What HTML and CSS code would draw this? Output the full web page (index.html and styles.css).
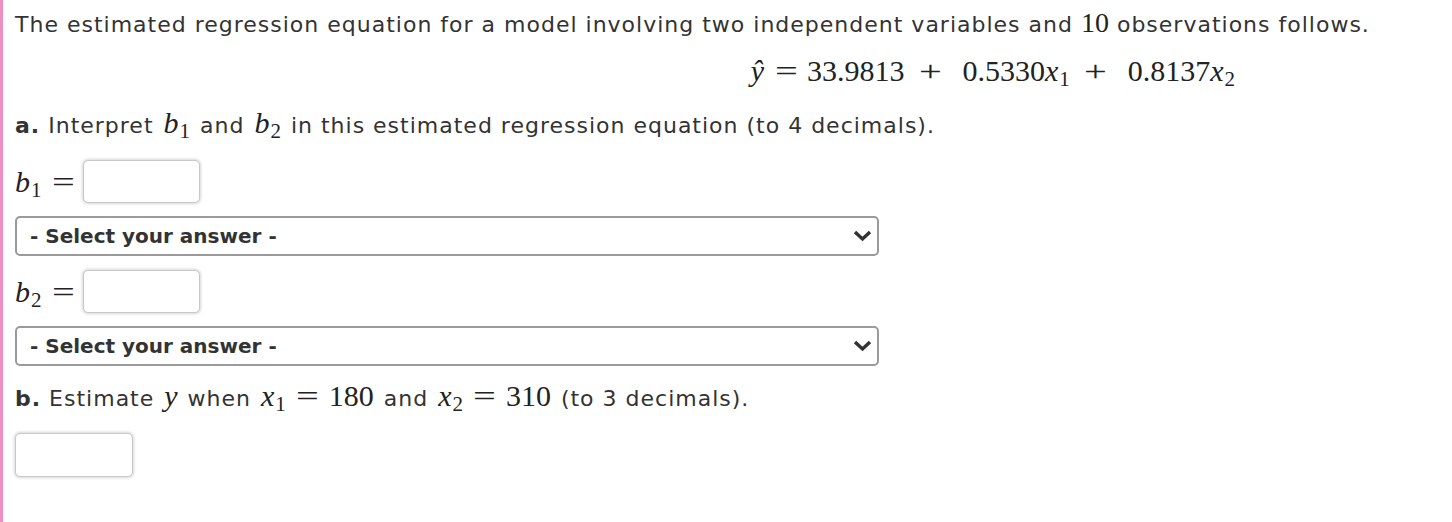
FILE: index.html
```html
<!DOCTYPE html>
<html>
<head>
<meta charset="utf-8">
<link rel="stylesheet" href="styles.css">
</head>
<body>
<div class="page">
  <p class="line first">The estimated regression equation for a model involving two independent variables and <span class="m num">10</span> observations follows.</p>
  <div class="eq"><span class="m"><i class="hat">ŷ</i><span class="op eqs">=</span>33.9813<span class="op plus">+</span>0.5330<i>x</i><sub>1</sub><span class="op plus">+</span>0.8137<i>x</i><sub>2</sub></span></div>
  <p class="line gap-a"><b>a.</b> Interpret <span class="m"><i>b</i><sub>1</sub></span> and <span class="m"><i>b</i><sub>2</sub></span> in this estimated regression equation (to 4 decimals).</p>
  <div class="row"><span class="m lbl"><i>b</i><sub>1</sub><span class="op lbleq">=</span></span><span class="box"></span></div>
  <div class="sel"><span>- Select your answer -</span><svg class="chev" width="19" height="12" viewBox="0 0 19 12"><polyline points="2,2 9.5,9 17,2" fill="none" stroke="#333" stroke-width="3.4"/></svg></div>
  <div class="row"><span class="m lbl"><i>b</i><sub>2</sub><span class="op lbleq">=</span></span><span class="box"></span></div>
  <div class="sel"><span>- Select your answer -</span><svg class="chev" width="19" height="12" viewBox="0 0 19 12"><polyline points="2,2 9.5,9 17,2" fill="none" stroke="#333" stroke-width="3.4"/></svg></div>
  <p class="line gap-b"><b>b.</b> Estimate <span class="m"><i>y</i></span> when <span class="m"><i>x</i><sub>1</sub><span class="op ieq">=</span>180</span> and <span class="m"><i>x</i><sub>2</sub><span class="op ieq">=</span>310</span> (to 3 decimals).</p>
  <div class="row last"><span class="box wide"></span></div>
</div>
</body>
</html>
```
FILE: styles.css
```css
html, body { margin: 0; padding: 0; background: #fff; }
.page {
  border-left: 3px solid #ee8fc1;
  min-height: 522px;
  box-sizing: border-box;
  padding: 10px 0 0 12px;
  width: 1452px;
  font-family: "DejaVu Sans", Verdana, sans-serif;
  font-size: 22px;
  letter-spacing: 1px;
  color: #333;
}
.line { margin: 0; line-height: 30px; height: 30px; white-space: nowrap; }
.line .m { margin: 0 2px; }
.m { font-family: "Liberation Serif", "DejaVu Serif", serif; font-size: 30px; color: #222; letter-spacing: 0; line-height: 0; }
.m i { font-style: italic; }
.m sub { font-size: 21px; vertical-align: -5px; line-height: 0; margin-left: 1px; }
.line .num { font-size: 28px; margin: 0; }
.op { display: inline-block; transform: scaleX(1.35); }
.eq {
  width: 1220px;
  text-align: right;
  height: 36px;
  line-height: 36px;
  margin-top: 16px;
}
.eq .m { font-size: 30px; }
.eq .eqs { margin: 0 12px 0 14px; }
.eq .plus { margin: 0 24px 0 17px; }
.gap-a { margin-top: 19px; }
.gap-b { margin-top: 18px; }
.row { display: flex; align-items: center; height: 43px; margin-top: 19px; }
.row + .sel { margin-top: 13px; }
.sel + .row { margin-top: 14px; }
.lbl { width: 68px; font-size: 30px; line-height: 1; }
.lbleq { margin-left: 13px; }
.ieq { margin: 0 13px; }
.box {
  display: block;
  width: 115px;
  height: 41px;
  border: 1px solid #c8c8c8;
  border-radius: 5px;
  box-shadow: 0 0 3px 1px rgba(0,0,0,0.16);
  background: #fff;
}
.box.wide { width: 116px; height: 42px; }
.sel {
  width: 842px;
  height: 36px;
  border: 2px solid #9a9a9a;
  border-radius: 5px;
  display: flex;
  align-items: center;
  justify-content: space-between;
  padding: 0 5px 0 13px;
  box-sizing: content-box;
  font-weight: bold;
  font-size: 20px;
  letter-spacing: 0;
  color: #333;
}
.chev { display: block; }
```
